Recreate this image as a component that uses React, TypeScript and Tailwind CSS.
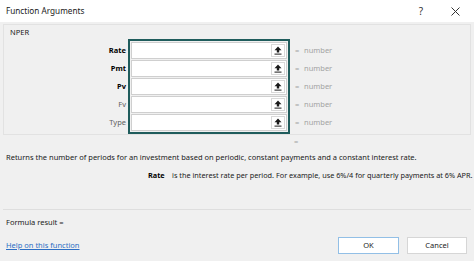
const args = [
  { name: 'Rate', bold: true },
  { name: 'Pmt', bold: true },
  { name: 'Pv', bold: true },
  { name: 'Fv', bold: false },
  { name: 'Type', bold: false },
]

function CollapseIcon() {
  return (
    <svg width="8" height="9" viewBox="0 0 8 9" fill="none">
      <path d="M4 0.5 L7.5 4.2 H5.2 V6.6 H2.8 V4.2 H0.5 Z" fill="#1a1a1a" />
      <rect x="0.5" y="7.6" width="7" height="1" fill="#1a1a1a" />
    </svg>
  )
}

function ArgInput() {
  return (
    <div className="flex h-[17px] mb-px items-center border border-[#cfcfcf] bg-white pr-px">
      <div className="flex-1" />
      <div className="flex h-[13px] w-[14px] items-center justify-center border border-[#d9d9d9] bg-white">
        <CollapseIcon />
      </div>
    </div>
  )
}

export default function App() {
  return (
    <div
      className="flex h-[261px] w-[474px] flex-col overflow-hidden bg-[#f0f0f0] text-[#1a1a1a]"
      style={{ fontFamily: '"Noto Sans", "Open Sans", sans-serif' }}
    >
      <div className="flex h-[22px] shrink-0 items-center bg-white pl-[6px] text-[8.2px]">
        <span className="flex-1">Function Arguments</span>
        <span className="mr-[28px] text-[10px] text-[#333]">?</span>
        <svg className="mr-[14px]" width="9" height="9" viewBox="0 0 9 9">
          <path d="M0.5 0.5 L8.5 8.5 M8.5 0.5 L0.5 8.5" stroke="#333" strokeWidth="1" />
        </svg>
      </div>

      <div className="px-[3px]">
        <div className="mt-[2px] h-[111px] border border-[#e2e2e2]">
          <div className="h-[14px] pl-[6px] pt-[3px] text-[7.5px] leading-[9px]">NPER</div>
          <div className="flex">
            <div className="w-[124px] pt-[3px] text-[7.5px]">
              {args.map((a) => (
                <div
                  key={a.name}
                  className={
                    'flex h-[18px] items-center justify-end pr-[2px] ' +
                    (a.bold ? 'font-bold text-black' : 'text-[#606060]')
                  }
                >
                  {a.name}
                </div>
              ))}
            </div>
            <div className="w-[162px] border-2 border-[#1f5c5c] p-px pb-0">
              {args.map((a) => (
                <ArgInput key={a.name} />
              ))}
            </div>
            <div className="pt-[3px] pl-[5px] text-[7.5px] text-[#a3a3a3]">
              {args.map((a) => (
                <div key={a.name} className="flex h-[18px] items-center">
                  <span className="w-[9px]">=</span>
                  <span>number</span>
                </div>
              ))}
            </div>
          </div>
        </div>
      </div>

      <div className="flex h-[14px] items-center pl-[294px] text-[7.5px] text-[#a3a3a3]">=</div>
      <div className="flex h-[18px] items-center pl-[6px] text-[7.5px] whitespace-nowrap">
        Returns the number of periods for an investment based on periodic, constant payments and a constant interest rate.
      </div>
      <div className="flex h-[16px] items-center pl-[148px] text-[7.3px] whitespace-nowrap">
        <span className="w-[24px] font-bold text-black">Rate</span>
        <span>is the interest rate per period. For example, use 6%/4 for quarterly payments at 6% APR.</span>
      </div>

      <div className="mx-[3px] mt-[26px] border-t border-[#dedede]" />
      <div className="flex h-[20px] items-center pl-[6px] pt-[6px] text-[7.5px]">Formula result =</div>

      <div className="mt-[7px] flex items-center pl-[6px] pr-[7px]">
        <a className="flex-1 text-[7.5px] text-[#2d6fc4] underline">Help on this function</a>
        <button className="h-[17px] w-[61px] border border-[#92bfe6] bg-white text-[7.5px]">OK</button>
        <button className="ml-[8px] h-[17px] w-[60px] border border-[#d6d6d6] bg-white text-[7.5px]">
          Cancel
        </button>
      </div>
    </div>
  )
}
